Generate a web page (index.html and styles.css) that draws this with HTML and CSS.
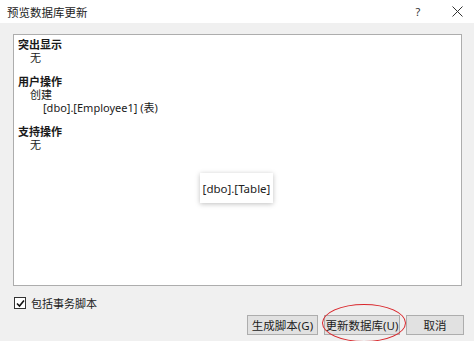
FILE: index.html
```html
<!DOCTYPE html>
<html>
<head>
<meta charset="utf-8">
<link rel="stylesheet" href="styles.css">
</head>
<body>
<div class="dialog">
  <div class="titlebar">
    <span class="title">预览数据库更新</span>
    <span class="help">?</span>
    <span class="close"><svg width="11" height="11" viewBox="0 0 11 11"><path d="M0.5 0.5L10.5 10.5M10.5 0.5L0.5 10.5" stroke="#333" stroke-width="1" fill="none"/></svg></span>
  </div>
  <div class="body">
    <div class="pane">
      <div class="group">
        <div class="head">突出显示</div>
        <div class="l1">无</div>
      </div>
      <div class="group">
        <div class="head">用户操作</div>
        <div class="l1">创建</div>
        <div class="l2">[dbo].[Employee1] (表)</div>
      </div>
      <div class="group">
        <div class="head">支持操作</div>
        <div class="l1">无</div>
      </div>
      <div class="tooltip">[dbo].[Table]</div>
    </div>
    <label class="check">
      <span class="box"><svg width="9" height="9" viewBox="0 0 9 9"><path d="M1 4.5L3.5 7L8 1.5" stroke="#111" stroke-width="1.6" fill="none"/></svg></span>
      <span>包括事务脚本</span>
    </label>
    <div class="buttons">
      <span class="btn b1">生成脚本(G)</span>
      <span class="btn b2">更新数据库(U)<span class="ring"></span></span>
      <span class="btn b3">取消</span>
    </div>
  </div>
</div>
</body>
</html>
```
FILE: styles.css
```css
* { box-sizing: border-box; }
html, body { margin: 0; padding: 0; }
body {
  width: 474px; height: 341px; overflow: hidden;
  font-family: "Noto Sans", "Noto Sans CJK SC", sans-serif;
  font-size: 11px; color: #1a1a1a;
  background: #f0f0f0;
}
.dialog { width: 474px; height: 341px; display: flex; flex-direction: column; }
.titlebar {
  height: 23px; background: #fff; display: flex; align-items: center;
  padding-left: 7px; position: relative;
}
.title { font-size: 11.5px; color: #222; flex: 1; }
.help { width: 16px; margin-right: 26px; font-size: 11px; color: #333; text-align: center; }
.close { width: 11px; height: 11px; margin-right: 11px; display: flex; }
.body { flex: 1; position: relative; padding: 11px 13px 0 13px; }
.pane {
  position: relative;
  height: 252px; width: 449px;
  background: #fff; border: 1px solid #adadad;
  padding: 3px 4px;
  line-height: 13px;
}
.group { margin-bottom: 11px; }
.head { font-weight: bold; }
.l1 { padding-left: 12px; }
.l2 { padding-left: 25px; }
.tooltip {
  position: absolute; left: 186px; top: 138px;
  width: 73px; height: 30px;
  background: #fff;
  box-shadow: 0 1px 5px rgba(0,0,0,0.25);
  display: flex; align-items: center; justify-content: center;
  font-size: 11.5px; color: #222;
}
.check { display: flex; align-items: center; margin-top: 10px; gap: 5px; height: 14px; margin-left: 1px; }
.box {
  width: 12px; height: 12px; border: 1px solid #333; background: #fff;
  display: flex; align-items: center; justify-content: center;
}
.buttons { display: flex; justify-content: flex-end; gap: 6px; margin-top: 5px; margin-right: -3px; }
.btn {
  position: relative;
  height: 20px; border: 1px solid #adadad; background: #e1e1e1;
  display: flex; align-items: center; justify-content: center;
  font-size: 11.5px; color: #222;
}
.b1 { width: 71px; }
.b2 { width: 76px; }
.b3 { width: 58px; }
.ring {
  position: absolute; left: -3px; top: -12px; width: 84px; height: 38px;
  border: 1.5px solid #d9262b; border-radius: 50%;
}
```
